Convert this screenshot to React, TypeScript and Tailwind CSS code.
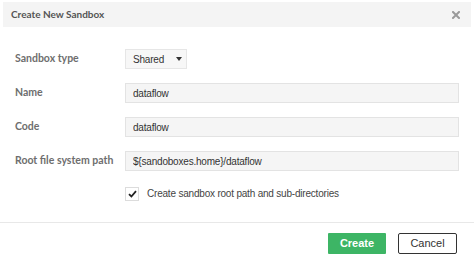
import React from "react";

const labelCls =
  "w-[110px] shrink-0 whitespace-nowrap text-[10.5px] font-bold text-[#6e6e6e] font-['Lato',sans-serif]";
const inputCls =
  "h-[20px] w-[334px] bg-[#f5f5f5] border border-[#e3e3e3] px-[7px] text-[10px] tracking-[-0.2px] text-[#333] font-['Liberation_Sans',Arial,sans-serif] outline-none";

const Row: React.FC<{ label: string; children: React.ReactNode }> = ({
  label,
  children,
}) => (
  <div className="flex items-center">
    <div className={labelCls}>{label}</div>
    {children}
  </div>
);

export default function App() {
  return (
    <div className="w-[474px] h-[269px] bg-white overflow-hidden flex flex-col">
      {/* Title bar */}
      <div className="mx-[3px] mt-[2px] h-[25px] bg-[#f4f4f4] flex items-center justify-between pl-[8px] pr-[11px]">
        <span className="text-[10px] font-bold text-[#555] font-['Lato',sans-serif]">
          Create New Sandbox
        </span>
        <svg width="8" height="8" viewBox="0 0 8 8">
          <path
            d="M1 1 L7 7 M7 1 L1 7"
            stroke="#9a9a9a"
            strokeWidth="2"
            strokeLinecap="square"
          />
        </svg>
      </div>

      {/* Form */}
      <div className="flex flex-col gap-[14px] pt-[22px] pl-[15px]">
        <Row label="Sandbox type">
          <div className="h-[20px] w-[62px] bg-[#f7f7f7] border border-[#e6e6e6] flex items-center justify-between pl-[7px] pr-[4px]">
            <span className="text-[10px] tracking-[-0.2px] text-[#333] font-['Liberation_Sans',Arial,sans-serif]">
              Shared
            </span>
            <svg width="6" height="4" viewBox="0 0 6 4">
              <path d="M0 0 L6 0 L3 4 Z" fill="#333" />
            </svg>
          </div>
        </Row>
        <Row label="Name">
          <input className={inputCls} defaultValue="dataflow" />
        </Row>
        <Row label="Code">
          <input className={inputCls} defaultValue="dataflow" />
        </Row>
        <Row label="Root file system path">
          <input
            className={inputCls}
            defaultValue="${sandoboxes.home}/dataflow"
          />
        </Row>
        <div className="flex items-center pl-[110px] mt-[1px]">
          <div className="w-[14px] h-[14px] border border-[#dcdcdc] bg-white flex items-center justify-center">
            <svg width="9" height="8" viewBox="0 0 9 8">
              <path
                d="M1 4.2 L3.4 6.5 L8 1.2"
                stroke="#222"
                strokeWidth="1.8"
                fill="none"
              />
            </svg>
          </div>
          <span className="ml-[8px] text-[10px] tracking-[-0.2px] text-[#444] font-['Liberation_Sans',Arial,sans-serif]">
            Create sandbox root path and sub-directories
          </span>
        </div>
      </div>

      {/* Footer */}
      <div className="mt-[21px] border-t border-[#e8e8e8] flex justify-end gap-[12px] pt-[10px] pr-[17px]">
        <button className="h-[21px] w-[58px] bg-[#3db565] text-white text-[11px] font-bold font-['Liberation_Sans',Arial,sans-serif] rounded-[1px]">
          Create
        </button>
        <button className="h-[21px] w-[59px] bg-white border-[1.5px] border-[#333] text-[#333] text-[11px] font-['Liberation_Sans',Arial,sans-serif] rounded-[2px]">
          Cancel
        </button>
      </div>
    </div>
  );
}
